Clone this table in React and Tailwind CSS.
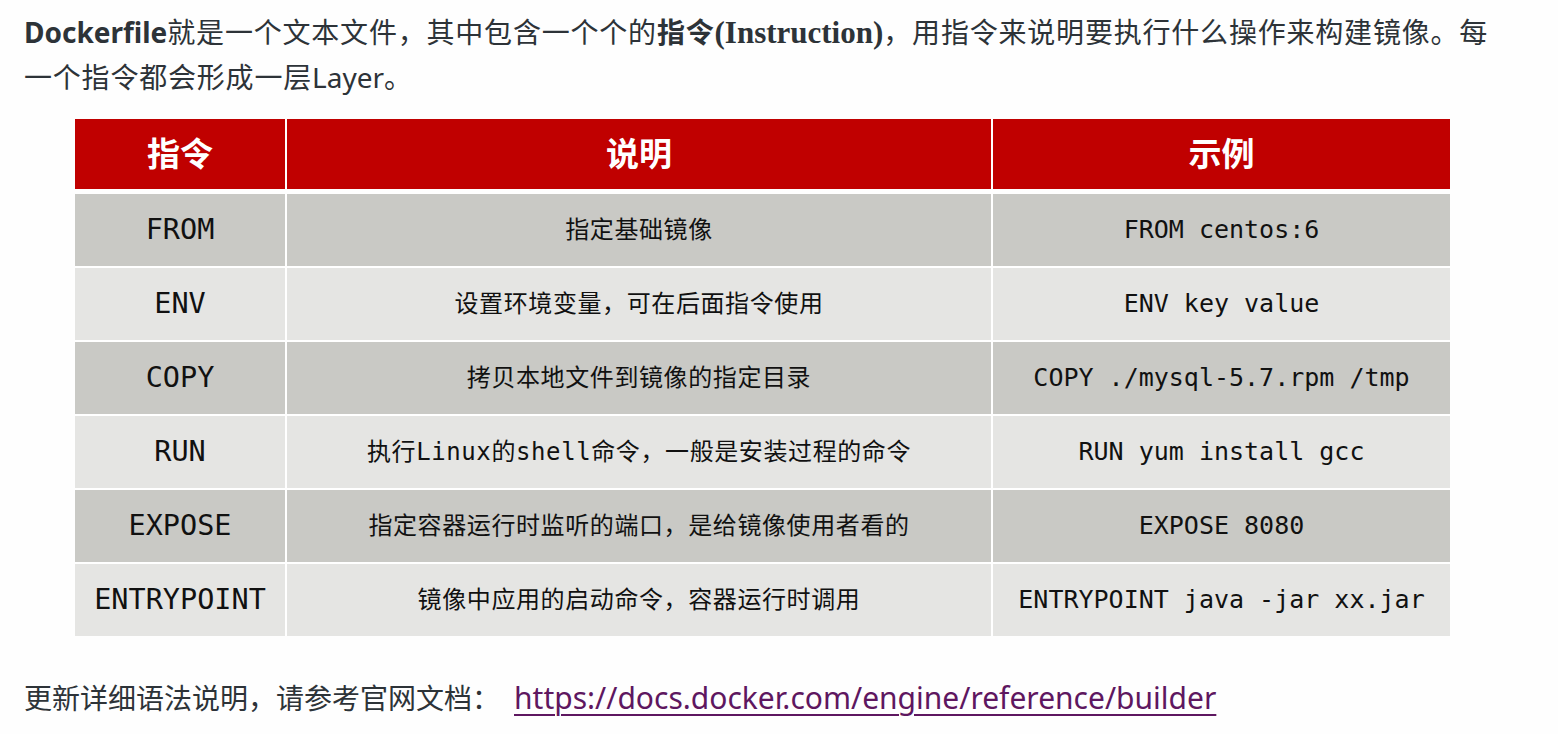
const ROWS = [
  ['FROM', '指定基础镜像', 'FROM centos:6'],
  ['ENV', '设置环境变量，可在后面指令使用', 'ENV key value'],
  ['COPY', '拷贝本地文件到镜像的指定目录', 'COPY ./mysql-5.7.rpm /tmp'],
  ['RUN', '执行Linux的shell命令，一般是安装过程的命令', 'RUN yum install gcc'],
  ['EXPOSE', '指定容器运行时监听的端口，是给镜像使用者看的', 'EXPOSE 8080'],
  ['ENTRYPOINT', '镜像中应用的启动命令，容器运行时调用', 'ENTRYPOINT java -jar xx.jar'],
];

const sans = "font-['Noto_Sans','Noto_Sans_CJK_SC',sans-serif]";
const mono = "font-['DejaVu_Sans_Mono','Noto_Sans_CJK_SC',monospace]";

export default function App() {
  return (
    <div className={`min-h-screen w-full bg-[#fefefe] text-[#2d3338] ${sans}`}>
      <div className="px-6 pt-[10px] text-[28px] leading-[44px] tracking-[0.8px]">
        <p>
          <b className="font-bold tracking-normal">Dockerfile</b>就是一个文本文件，其中包含一个个的
          <b className="font-bold">指令</b>
          <b className="font-['Liberation_Serif',serif] text-[31px] font-bold tracking-normal">(Instruction)</b>
          ，用指令来说明要执行什么操作来构建镜像。每
          <br />
          一个指令都会形成一层<span className="tracking-normal">Layer</span>。
        </p>
      </div>

      <div className="ml-[75px] mt-[20px] flex w-[1375px] flex-col gap-[5px]">
        <div className="grid h-[70px] grid-cols-[210px_704px_457px] gap-[2px] bg-white">
          {['指令', '说明', '示例'].map((h) => (
            <div
              key={h}
              className="flex items-center justify-center bg-[#c00000] text-[33px] font-bold text-white"
            >
              {h}
            </div>
          ))}
        </div>
        <div className="flex flex-col gap-[2px] bg-white">
          {ROWS.map(([cmd, desc, ex], i) => {
            const bg = i % 2 === 0 ? 'bg-[#c9c9c5]' : 'bg-[#e5e5e3]';
            return (
              <div key={cmd} className="grid h-[72px] grid-cols-[210px_704px_457px] gap-[2px]">
                <div className={`flex items-center justify-center ${bg} ${mono} text-[28.5px] text-[#111]`}>
                  {cmd}
                </div>
                <div className={`flex items-center justify-center ${bg} ${mono} text-[24px] tracking-[0.6px] text-[#111]`}>
                  {desc}
                </div>
                <div className={`flex items-center justify-center ${bg} ${mono} text-[25px] text-[#111]`}>
                  {ex}
                </div>
              </div>
            );
          })}
        </div>
      </div>

      <div className="mt-[40px] px-6 text-[28px] leading-[44px]">
        更新详细语法说明，请参考官网文档：
        <a
          href="#"
          className="ml-[14px] text-[30px] text-[#5e1760] underline decoration-[2px] underline-offset-[5px]"
        >
          https://docs.docker.com/engine/reference/builder
        </a>
      </div>
    </div>
  );
}
